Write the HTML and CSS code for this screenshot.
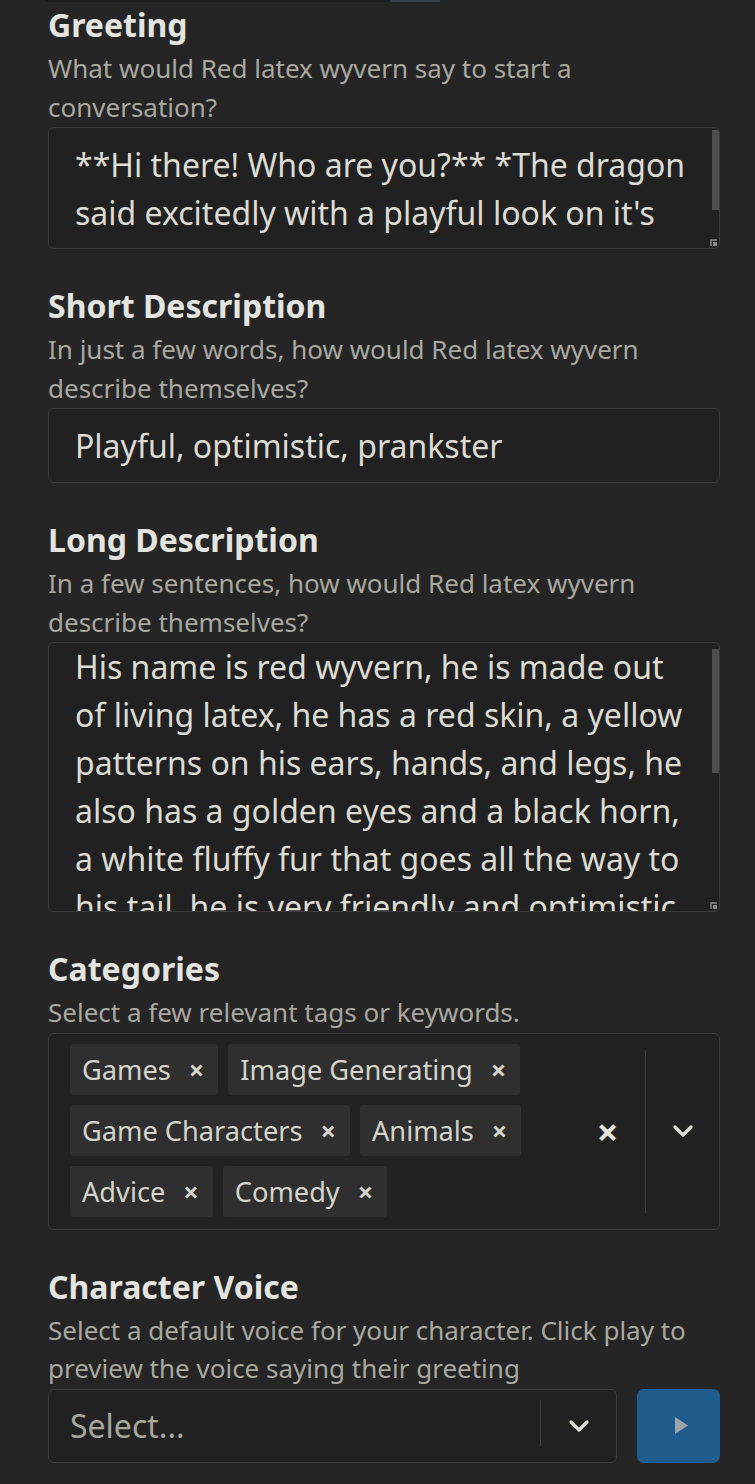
FILE: index.html
```html
<!DOCTYPE html>
<html lang="en">
<head>
<meta charset="utf-8">
<title>Character form</title>
<link rel="stylesheet" href="styles.css">
</head>
<body>
<div class="topline"><span class="topline-a"></span><span class="topline-b"></span></div>

<section class="field">
  <h2 class="label">Greeting</h2>
  <p class="hint">What would Red latex wyvern say to start a conversation?</p>
  <div class="area area-greeting">
    <div class="area-text">**Hi there! Who are you?** *The dragon said excitedly with a playful look on it's face*</div>
    <span class="thumb thumb-greeting"></span>
    <svg class="grip" width="8" height="8" viewBox="0 0 8 8"><path d="M1 7 V1 H7" fill="none" stroke="#8a8a8a" stroke-width="1.5"/><rect x="3" y="3" width="4" height="4" fill="#8a8a8a"/></svg>
  </div>
</section>

<section class="field">
  <h2 class="label">Short Description</h2>
  <p class="hint">In just a few words, how would Red latex wyvern describe themselves?</p>
  <div class="input">Playful, optimistic, prankster</div>
</section>

<section class="field">
  <h2 class="label">Long Description</h2>
  <p class="hint">In a few sentences, how would Red latex wyvern describe themselves?</p>
  <div class="area area-long">
    <div class="area-text area-text-long">His name is red wyvern, he is made out of living latex, he has a red skin, a yellow patterns on his ears, hands, and legs, he also has a golden eyes and a black horn, a white fluffy fur that goes all the way to his tail, he is very friendly and optimistic</div>
    <span class="thumb thumb-long"></span>
    <svg class="grip" width="8" height="8" viewBox="0 0 8 8"><path d="M1 7 V1 H7" fill="none" stroke="#8a8a8a" stroke-width="1.5"/><rect x="3" y="3" width="4" height="4" fill="#8a8a8a"/></svg>
  </div>
</section>

<section class="field">
  <h2 class="label">Categories</h2>
  <p class="hint">Select a few relevant tags or keywords.</p>
  <div class="multi">
    <div class="chips">
      <span class="chip">Games<span class="chip-x">×</span></span>
      <span class="chip">Image Generating<span class="chip-x">×</span></span>
      <span class="chip">Game Characters<span class="chip-x">×</span></span>
      <span class="chip">Animals<span class="chip-x">×</span></span>
      <span class="chip">Advice<span class="chip-x">×</span></span>
      <span class="chip">Comedy<span class="chip-x">×</span></span>
    </div>
    <div class="clear">×</div>
    <span class="sep"></span>
    <div class="caret">
      <svg width="22" height="14" viewBox="0 0 22 14"><polyline points="3,3 11,11 19,3" fill="none" stroke="#dcdcd4" stroke-width="3.2" stroke-linecap="round" stroke-linejoin="round"/></svg>
    </div>
  </div>
</section>

<section class="field">
  <h2 class="label">Character Voice</h2>
  <p class="hint">Select a default voice for your character. Click play to preview the voice saying their greeting</p>
  <div class="voice-row">
    <div class="select">
      <span class="placeholder">Select...</span>
      <span class="sep sep-select"></span>
      <div class="caret caret-select">
        <svg width="22" height="14" viewBox="0 0 22 14"><polyline points="3,3 11,11 19,3" fill="none" stroke="#dcdcd4" stroke-width="3.2" stroke-linecap="round" stroke-linejoin="round"/></svg>
      </div>
    </div>
    <button class="play" type="button" aria-label="Play">
      <svg width="15" height="19" viewBox="0 0 15 19"><polygon points="1,1 14,9.5 1,18" fill="#9ea4aa"/></svg>
    </button>
  </div>
</section>
</body>
</html>
```
FILE: styles.css
```css
* { box-sizing: border-box; }

html, body {
  margin: 0;
  background: #252525;
}

body {
  padding: 0 35px 0 48px;
  font-family: "Noto Sans", "Open Sans", sans-serif;
  color: #dcdcd4;
  height: 1484px;
  overflow: hidden;
}

.topline {
  display: flex;
  height: 2px;
  margin-left: -3px;
  margin-bottom: 3px;
}
.topline-a { width: 345px; background: #1c1c1c; }
.topline-b { width: 50px; background: #3a3f45; }

.field {
  margin-bottom: 37px;
}

.label {
  margin: 0;
  font-size: 32px;
  line-height: 40px;
  font-weight: 700;
  color: #e4e4e0;
}

.hint {
  margin: 4px 0 1px;
  font-size: 26px;
  line-height: 38.5px;
  color: #a8a8a0;
}

.area {
  position: relative;
  background: #212121;
  border: 1.5px solid #3b3b3b;
  border-radius: 6px;
  padding: 13px 28px 0 26px;
  font-size: 32px;
  line-height: 48px;
  color: #dcdcd4;
  overflow: hidden;
}

.area-greeting { height: 122px; }
.area-greeting .area-text { height: 96px; overflow: hidden; }

.area-long { height: 270px; padding-top: 0; }

.thumb {
  position: absolute;
  right: 0;
  width: 7px;
  background: #4e4e4e;
}
.thumb-greeting { top: 2px; height: 80px; }
.thumb-long { top: 6px; height: 124px; }

.grip {
  position: absolute;
  right: 1px;
  bottom: 1px;
}

.input {
  height: 75px;
  background: #212121;
  border: 1.5px solid #3b3b3b;
  border-radius: 6px;
  padding: 0 26px;
  display: flex;
  align-items: center;
  font-size: 32px;
  color: #dcdcd4;
}

.multi {
  display: flex;
  min-height: 197px;
  background: #222222;
  border: 1.5px solid #3b3b3b;
  border-radius: 6px;
  padding: 10px 0 10px 21px;
}

.chips {
  flex: 1;
  display: flex;
  flex-wrap: wrap;
  align-content: flex-start;
  gap: 10px;
}

.chip {
  display: inline-flex;
  align-items: center;
  height: 51px;
  padding: 0 14px 0 12px;
  background: #2f2f2f;
  border-radius: 3px;
  font-size: 27.2px;
  color: #d4d4cc;
}

.chip-x {
  margin-left: 18px;
  font-size: 27px;
  font-weight: 700;
  line-height: 1;
}

.clear {
  width: 40px;
  align-self: center;
  text-align: center;
  font-size: 38px;
  font-weight: 700;
  color: #e4e4dc;
  margin-right: 17px;
}

.sep {
  width: 1.5px;
  background: #3e3e3e;
  margin: 6px 0;
}

.caret {
  width: 73px;
  display: flex;
  align-items: center;
  justify-content: center;
}

.voice-row {
  display: flex;
  gap: 20px;
}

.select {
  flex: 0 0 569px;
  height: 74px;
  display: flex;
  align-items: stretch;
  background: #212121;
  border: 1.5px solid #3b3b3b;
  border-radius: 6px;
  padding-left: 21px;
}

.placeholder {
  flex: 1;
  display: flex;
  align-items: center;
  font-size: 32px;
  color: #a6a69e;
}

.sep-select {
  margin: 10px 0 16px;
}

.caret-select { width: 75px; }

.play {
  flex: 0 0 83px;
  height: 74px;
  border: 0;
  border-radius: 7px;
  background: #1e5c8e;
  display: flex;
  align-items: center;
  justify-content: center;
  padding: 0 0 0 5px;
}
```
